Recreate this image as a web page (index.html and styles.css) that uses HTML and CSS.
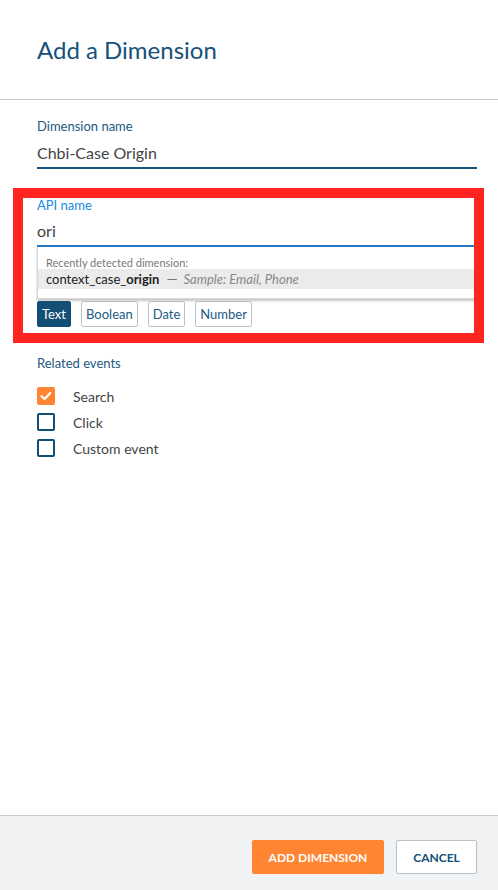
FILE: index.html
```html
<!DOCTYPE html>
<html>
<head>
<meta charset="utf-8">
<link rel="stylesheet" href="styles.css">
</head>
<body>
<div class="dialog">
  <header class="head">
    <h1 class="title">Add a Dimension</h1>
  </header>
  <main class="form">
    <div class="field">
      <div class="label">Dimension name</div>
      <div class="input">Chbi-Case Origin</div>
    </div>
    <div class="field api">
      <div class="label label-active">API name</div>
      <div class="input input-active">ori</div>
      <div class="menu">
        <div class="menu-head">Recently detected dimension:</div>
        <div class="menu-row">context_case_<b>origin</b><span class="dash">—</span><i class="sample">Sample: Email, Phone</i></div>
      </div>
      <div class="chips">
        <span class="chip chip-on">Text</span>
        <span class="chip">Boolean</span>
        <span class="chip">Date</span>
        <span class="chip">Number</span>
      </div>
      <div class="highlight"></div>
    </div>
    <div class="events">
      <div class="label">Related events</div>
      <ul class="checks">
        <li class="check"><span class="box box-on"><svg viewBox="0 0 18 18" width="18" height="18"><path d="M4.6 9.2 L7.6 12 L13.2 6" fill="none" stroke="#fff" stroke-width="2.2" stroke-linecap="round" stroke-linejoin="round"/></svg></span>Search</li>
        <li class="check"><span class="box"></span>Click</li>
        <li class="check"><span class="box"></span>Custom event</li>
      </ul>
    </div>
  </main>
  <footer class="foot">
    <button class="btn btn-primary">ADD DIMENSION</button>
    <button class="btn btn-secondary">CANCEL</button>
  </footer>
</div>
</body>
</html>
```
FILE: styles.css
```css
* { box-sizing: border-box; }
html, body { margin: 0; padding: 0; }
body {
  font-family: Lato, "Open Sans", "Liberation Sans", sans-serif;
  background: #fff;
  color: #444;
}
.dialog {
  display: flex;
  flex-direction: column;
  min-height: 100vh;
}
.head {
  height: 100px;
  border-bottom: 1px solid #c4c7cb;
  padding: 34px 0 0 37px;
}
.title {
  margin: 0;
  font-size: 24px;
  font-weight: 400;
  line-height: 32px;
  color: #15517a;
}
.form {
  flex: 1;
  padding: 18px 21px 0 37px;
}
.label {
  font-size: 13px;
  line-height: 16px;
  color: #1c5880;
}
.label-active { color: #2289e2; }
.input {
  margin-top: 9px;
  font-size: 16px;
  line-height: 20px;
  color: #444;
  padding-bottom: 4px;
  border-bottom: 2px solid #15557d;
}
.input-active {
  margin-top: 8px;
  padding-bottom: 4px;
  border-bottom: 2px solid #2a78c4;
}
.api {
  position: relative;
  margin-top: 28px;
}
.menu {
  background: #fff;
  border: 1px solid #d8d8d8;
  border-top: none;
  box-shadow: 0 2px 2px rgba(0,0,0,0.22);
  margin-right: -4px;
  padding: 10px 0 9px;
}
.menu-head {
  padding-left: 8px;
  font-size: 11px;
  line-height: 12px;
  color: #777;
}
.menu-row {
  padding-left: 8px;
  height: 20px;
  line-height: 20px;
  background: #ebebeb;
  font-size: 13px;
  color: #222;
}
.menu-row b { font-weight: 700; }
.dash { color: #777; margin: 0 6px 0 7px; font-size: 14px; }
.sample { color: #888; font-style: italic; }
.chips {
  display: flex;
  gap: 10px;
  margin-top: 2px;
}
.chip {
  height: 26px;
  line-height: 24px;
  padding: 0 4px;
  border: 1px solid #b9c3cc;
  border-radius: 2px;
  font-size: 13px;
  color: #1c5a84;
}
.chip-on {
  background: #134f74;
  border-color: #134f74;
  color: #fff;
}
.highlight {
  position: absolute;
  left: -24px;
  top: -9px;
  width: 471px;
  height: 155px;
  border: 10px solid #ff2420;
  pointer-events: none;
}
.events { margin-top: 28px; }
.checks {
  list-style: none;
  margin: 16px 0 0;
  padding: 0;
  display: flex;
  flex-direction: column;
  gap: 8px;
}
.check {
  display: flex;
  align-items: center;
  height: 18px;
  font-size: 14px;
  color: #444;
}
.box {
  width: 18px;
  height: 18px;
  border: 2px solid #134f74;
  border-radius: 2px;
  margin-right: 18px;
  display: flex;
}
.box-on {
  background: #ff8533;
  border-color: #ff8533;
  border: none;
}
.foot {
  height: 75px;
  border-top: 1px solid #c9ced3;
  background: #f0f2f4;
  display: flex;
  justify-content: flex-end;
  align-items: flex-start;
  gap: 12px;
  padding: 24px 21px 0 0;
}
.btn {
  height: 34px;
  font-family: Lato, "Open Sans", "Liberation Sans", sans-serif;
  font-size: 12px;
  font-weight: 700;
  border-radius: 2px;
  cursor: pointer;
}
.btn-primary {
  width: 132px;
  background: #ff8533;
  border: 1px solid #ff8533;
  color: #fff;
}
.btn-secondary {
  width: 81px;
  background: #fff;
  border: 1px solid #b8c1ca;
  color: #134f74;
}
```
